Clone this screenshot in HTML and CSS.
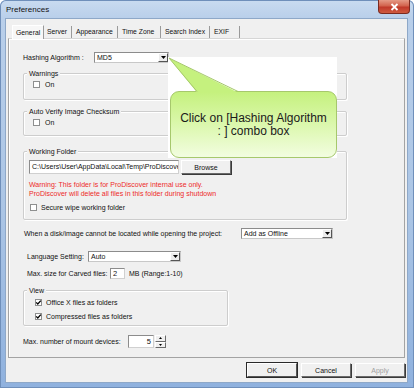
FILE: index.html
```html
<!DOCTYPE html>
<html>
<head>
<meta charset="utf-8">
<link rel="stylesheet" href="styles.css">
</head>
<body>
<div class="window">
  <div class="titlebar">
    <span class="title">Preferences</span>
    <div class="close"><svg width="9" height="8" viewBox="0 0 9 8"><path d="M1.5 1 L7.5 7 M7.5 1 L1.5 7" stroke="#fff" stroke-width="1.8"/></svg></div>
  </div>
  <div class="client">
    <div class="tabs">
      <div class="tab active w-general">General</div>
      <div class="tab w-server">Server</div>
      <div class="tab w-appearance">Appearance</div>
      <div class="tab w-timezone">Time Zone</div>
      <div class="tab w-search">Search Index</div>
      <div class="tab w-exif">EXIF</div>
    </div>
    <div class="panel">
      <div class="row r-hash">
        <span class="lbl lbl-hash">Hashing Algorithm :</span>
        <div class="combo c-hash"><span class="ctext">MD5</span><span class="carrow"><svg width="5" height="3" viewBox="0 0 5 3"><path d="M0 0 H5 L2.5 3 Z" fill="#000"/></svg></span></div>
      </div>

      <div class="group g-warn">
        <div class="legend">Warnings</div>
        <div class="chkrow cr-warn"><span class="chk"></span><span>On</span></div>
      </div>

      <div class="group g-verify">
        <div class="legend">Auto Verify Image Checksum</div>
        <div class="chkrow cr-warn"><span class="chk"></span><span>On</span></div>
      </div>

      <div class="group g-folder">
        <div class="legend">Working Folder</div>
        <div class="folderrow">
          <div class="textbox tb-folder">C:\Users\User\AppData\Local\Temp\ProDiscover</div>
          <div class="btn btn-browse">Browse</div>
        </div>
        <div class="warntext">Warning: This folder is for ProDiscover internal use only.<br>ProDiscover will delete all files in this folder during shutdown</div>
        <div class="chkrow cr-secure"><span class="chk"></span><span>Secure wipe working folder</span></div>
      </div>

      <div class="row r-when">
        <span class="lbl lbl-when">When a disk/image cannot be located while opening the project:</span>
        <div class="combo c-when"><span class="ctext">Add as Offline</span><span class="carrow"><svg width="5" height="3" viewBox="0 0 5 3"><path d="M0 0 H5 L2.5 3 Z" fill="#000"/></svg></span></div>
      </div>

      <div class="row r-lang">
        <span class="lbl lbl-lang">Language Setting:</span>
        <div class="combo c-lang"><span class="ctext">Auto</span><span class="carrow"><svg width="5" height="3" viewBox="0 0 5 3"><path d="M0 0 H5 L2.5 3 Z" fill="#000"/></svg></span></div>
      </div>

      <div class="row r-size">
        <span class="lbl lbl-size">Max. size for Carved files:</span>
        <div class="textbox tb-size">2</div>
        <span class="lbl lbl-mb">MB (Range:1-10)</span>
      </div>

      <div class="group g-view">
        <div class="legend">View</div>
        <div class="chkrow cr-view1"><span class="chk"><svg width="7" height="7" viewBox="0 0 7 7"><path d="M1.2 3.4 L2.8 5 L5.8 1.6" stroke="#000" stroke-width="1.3" fill="none"/></svg></span><span>Office X files as folders</span></div>
        <div class="chkrow cr-view2"><span class="chk"><svg width="7" height="7" viewBox="0 0 7 7"><path d="M1.2 3.4 L2.8 5 L5.8 1.6" stroke="#000" stroke-width="1.3" fill="none"/></svg></span><span>Compressed files as folders</span></div>
      </div>

      <div class="row r-mount">
        <span class="lbl lbl-mount">Max. number of mount devices:</span>
        <div class="textbox tb-mount">5</div>
        <div class="spin">
          <div class="spinbtn"><svg width="3" height="2" viewBox="0 0 3 2"><path d="M0 2 H3 L1.5 0 Z" fill="#000"/></svg></div>
          <div class="spinbtn"><svg width="3" height="2" viewBox="0 0 3 2"><path d="M0 0 H3 L1.5 2 Z" fill="#000"/></svg></div>
        </div>
      </div>
    </div>
    <div class="buttons">
      <div class="btn btn-dlg btn-default">OK</div>
      <div class="btn btn-dlg">Cancel</div>
      <div class="btn btn-dlg btn-disabled">Apply</div>
    </div>
  </div>

  <div class="callout">
    <div class="bubble">Click on [Hashing Algorithm<br>: ] combo box</div>
    <svg class="tail" width="169" height="40" viewBox="0 0 169 40">
      <polygon points="1,1 29,35.6 70,35.6" fill="#c5f17e"/>
      <path d="M1 1 L29 34.5 M1 1 L70 34.5" stroke="#a6c86c" stroke-width="1" fill="none"/>
    </svg>
  </div>
</div>
</body>
</html>
```

FILE: styles.css
```css
* { box-sizing: border-box; }
html, body { margin: 0; padding: 0; }
body {
  width: 414px;
  height: 388px;
  overflow: hidden;
  background: #fff;
  font-family: "Liberation Sans", Arial, sans-serif;
  font-size: 7px;
  color: #111;
}
.window {
  position: relative;
  width: 414px;
  height: 388px;
  display: flex;
  flex-direction: column;
  padding: 0 6px 5px 5px;
  border-radius: 6px 6px 0 0;
  background: linear-gradient(to bottom, #c9dbf0 0, #b9cfea 18px, #abc5e5 55%, #8fb1de 100%);
  box-shadow: inset 0 0 0 1px #6f8fba;
}
.titlebar {
  height: 18px;
  display: flex;
  align-items: center;
  justify-content: space-between;
  padding-left: 1px;
}
.title {
  font-size: 8px;
  color: #111;
  margin-top: 1px;
}
.close {
  align-self: flex-start;
  width: 32px;
  height: 14px;
  margin-right: -2px;
  border: 1px solid #7b2a1f;
  border-top: none;
  border-radius: 0 0 4px 4px;
  background: linear-gradient(to bottom, #e59a86 0, #d2634d 45%, #c0392a 55%, #cf5a3f 100%);
  display: flex;
  align-items: center;
  justify-content: center;
}
.client {
  flex: 1;
  background: #f0f0f0;
  border: 1px solid #8ea8c8;
  padding: 6px 2px 0 2px;
  display: flex;
  flex-direction: column;
}
.tabs {
  display: flex;
  height: 13px;
  padding-left: 4px;
  align-items: flex-end;
}
.tab {
  height: 12px;
  padding-left: 3px;
  line-height: 12px;
  font-size: 6.8px;
  border-right: 1px solid #9a9a9a;
  color: #111;
}
.tab.active {
  height: 14px;
  line-height: 13px;
  margin-bottom: -1px;
  background: #f7f7f7;
  border-left: 1px solid #fff;
  border-top: 1px solid #fff;
  position: relative;
  z-index: 1;
}
.w-general { width: 32px; }
.w-server { width: 28px; }
.w-appearance { width: 46px; padding-left: 4px; }
.w-timezone { width: 43px; padding-left: 4px; }
.w-search { width: 49px; padding-left: 4px; }
.w-exif { width: 30px; padding-left: 4px; }

.panel {
  width: 397px;
  height: 320px;
  border: 1px solid #a3a3a3;
  border-top-color: #d6d6d6;
  box-shadow: inset 1px 1px 0 #fff;
  display: flex;
  flex-direction: column;
}
.row {
  display: flex;
  align-items: center;
  padding-left: 14px;
  white-space: nowrap;
}
.lbl { white-space: nowrap; }
.r-hash { margin-top: 13px; height: 11px; }
.lbl-hash { width: 71px; }
.c-hash { width: 75px; }

.combo {
  height: 11px;
  background: #fff;
  border: 1px solid #8c8c8c;
  border-right-color: #c8c8c8;
  border-bottom-color: #c8c8c8;
  display: flex;
  align-items: center;
  justify-content: space-between;
  padding-left: 2px;
}
.ctext { font-size: 7px; line-height: 9px; }
.carrow {
  width: 10px;
  height: 9px;
  background: #ececec;
  border: 1px solid #fff;
  border-right-color: #555;
  border-bottom-color: #555;
  display: flex;
  align-items: center;
  justify-content: center;
}

.group {
  margin-left: 14px;
  border: 1px solid #cdcdcd;
  border-radius: 2px;
  box-shadow: 1px 1px 0 #fff, inset 1px 1px 0 #fff;
  display: flex;
  flex-direction: column;
}
.legend {
  margin: -5px 0 0 3px;
  padding: 0 2px;
  line-height: 9px;
  background: #f0f0f0;
  width: fit-content;
  white-space: nowrap;
}
.g-warn { width: 324px; height: 27px; margin-top: 10px; }
.g-verify { width: 324px; height: 25px; margin-top: 11px; }
.g-folder { width: 324px; height: 69px; margin-top: 15px; }
.g-view { width: 205px; height: 36px; margin-top: 11px; }

.chkrow {
  display: flex;
  align-items: center;
  height: 9px;
  white-space: nowrap;
}
.chk {
  width: 7px;
  height: 7px;
  border: 1px solid #8e8f8f;
  background: #fff;
  margin-right: 5px;
  display: flex;
  align-items: center;
  justify-content: center;
  flex: none;
}
.chk svg { display: block; margin: -1px; }
.cr-warn { margin-top: 2px; padding-left: 9px; }
.cr-secure { margin-top: 5px; padding-left: 6px; }
.cr-secure .chk { margin-right: 4px; }
.cr-view1 { margin-top: 3px; padding-left: 11px; }
.cr-view2 { margin-top: 5px; padding-left: 11px; }
.cr-view1 .chk, .cr-view2 .chk { margin-right: 4px; }

.folderrow {
  display: flex;
  align-items: center;
  margin-top: 4px;
  padding-left: 5px;
  gap: 2px;
}
.textbox {
  background: #fff;
  border: 1px solid #8c8c8c;
  border-right-color: #d0d0d0;
  border-bottom-color: #d0d0d0;
  white-space: nowrap;
  overflow: hidden;
  padding-left: 2px;
}
.tb-folder { width: 150px; height: 14px; line-height: 12px; }
.btn {
  display: flex;
  align-items: center;
  justify-content: center;
  background: #f0f0f0;
  border: 1px solid #fff;
  border-right-color: #6a6a6a;
  border-bottom-color: #6a6a6a;
  box-shadow: 1px 1px 0 #3a3a3a;
  font-size: 7px;
}
.btn-browse { width: 50px; height: 14px; }
.warntext {
  margin-top: 6px;
  padding-left: 5px;
  color: #ee2a2a;
  line-height: 9px;
  white-space: nowrap;
}

.r-when { margin-top: 8px; height: 11px; padding-left: 15px; }
.lbl-when { width: 217px; }
.c-when { width: 92px; }

.r-lang { margin-top: 12px; height: 11px; padding-left: 18px; }
.lbl-lang { width: 61px; }
.c-lang { width: 93px; }

.r-size { margin-top: 6px; height: 11px; padding-left: 18px; }
.lbl-size { width: 83px; }
.tb-size { width: 15px; height: 11px; line-height: 9px; font-size: 7.5px; }
.lbl-mb { margin-left: 4px; }

.r-mount { margin-top: 9px; height: 13px; padding-left: 14px; }
.lbl-mount { width: 105px; }
.tb-mount { width: 26px; height: 13px; line-height: 11px; text-align: right; padding-right: 2px; font-size: 7.5px; }
.spin {
  width: 11px;
  height: 13px;
  margin-left: 1px;
  display: flex;
  flex-direction: column;
}
.spinbtn {
  flex: 1;
  background: #f0f0f0;
  border: 1px solid #fff;
  border-right-color: #6a6a6a;
  border-bottom-color: #6a6a6a;
  display: flex;
  align-items: center;
  justify-content: center;
}

.buttons {
  display: flex;
  justify-content: flex-end;
  gap: 4px;
  margin-top: 5px;
  padding-right: 0;
}
.btn-dlg { width: 50px; height: 14px; }
.btn-default { box-shadow: 0 0 0 1px #2a2a2a; border-right-color: #555; border-bottom-color: #555; }
.btn-disabled { color: #a0a0a0; }

.callout {
  position: absolute;
  left: 168px;
  top: 57px;
  width: 169px;
  height: 101px;
  background: #fff;
  padding: 34px 0 0 2px;
}
.bubble {
  width: 167px;
  height: 67px;
  border: 1px solid #a6c86c;
  border-radius: 9px;
  background: linear-gradient(to bottom, #c5f17e 0, #d9f7a8 45%, #f2fde0 100%);
  font-family: "Liberation Sans", Arial, sans-serif;
  font-size: 12px;
  line-height: 13px;
  color: #1a1a1a;
  text-align: center;
  display: flex;
  align-items: center;
  justify-content: center;
  padding-top: 1px;
}
.tail {
  position: absolute;
  left: 0;
  top: 0;
}
```
